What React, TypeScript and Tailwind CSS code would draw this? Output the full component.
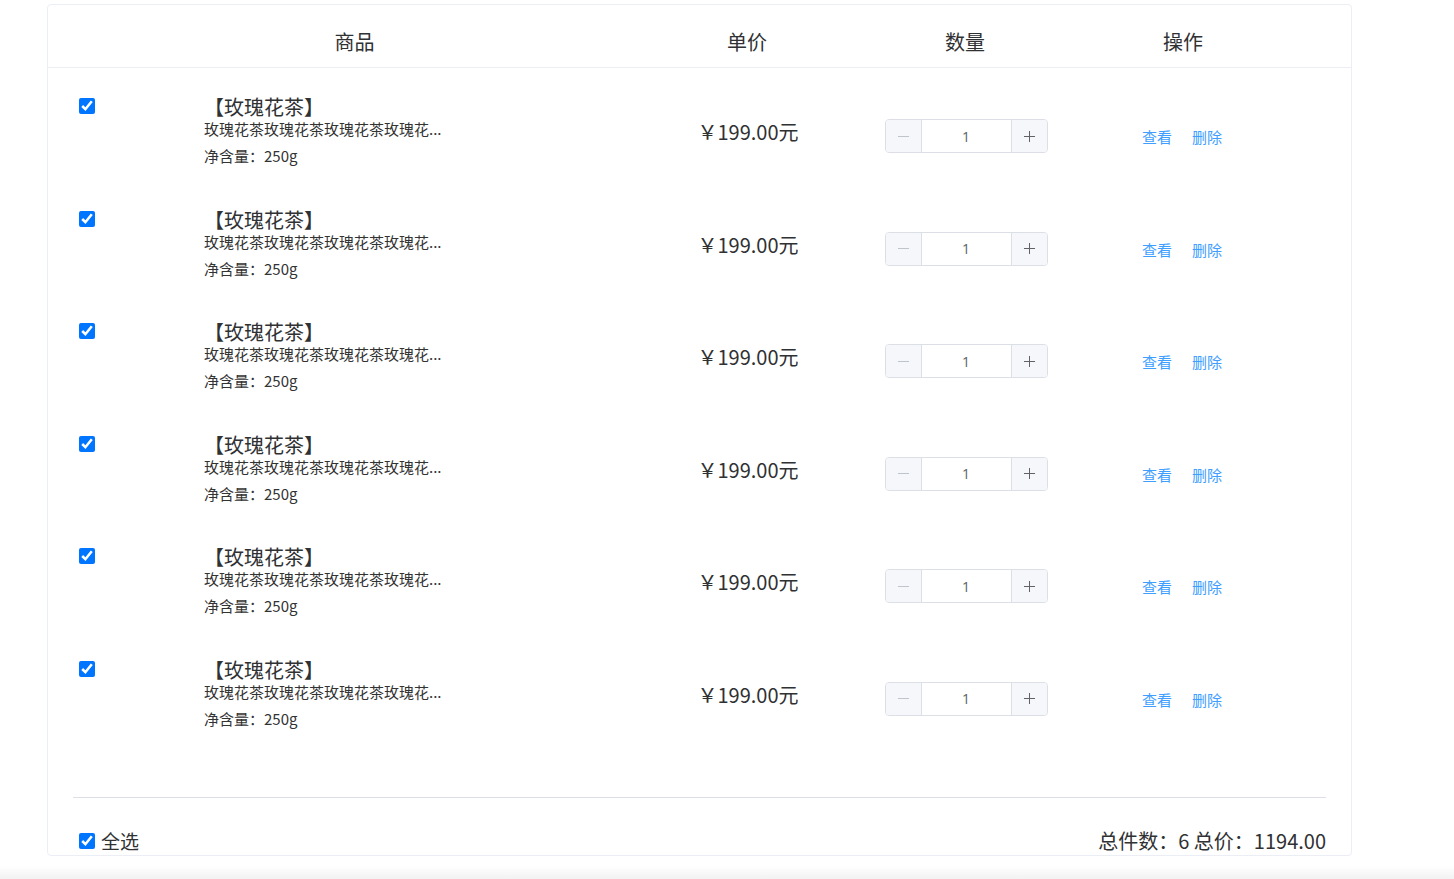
const items = Array.from({ length: 6 }, (_, i) => ({
  id: i + 1,
  title: "【玫瑰花茶】",
  desc: "玫瑰花茶玫瑰花茶玫瑰花茶玫瑰花茶玫瑰花茶玫瑰花茶",
  weight: "250g",
  price: 199,
  count: 1,
}));

// keep the first 15 chars, like the original "..." clamp
const clip = (s: string, n: number) => (s.length > n ? s.slice(0, n) + "..." : s);

const Stepper: React.FC<{ value: number }> = ({ value }) => (
  <div className="flex h-[34px] w-[163px] overflow-hidden rounded-[4px] border border-[#dcdfe6] bg-white">
    <button className="flex w-[36px] items-center justify-center border-r border-[#dcdfe6] bg-[#f5f7fa]">
      <span className="block h-px w-[11px] bg-[#c0c4cc]" />
    </button>
    <div className="flex flex-1 items-center justify-center font-['Open_Sans',sans-serif] text-[14px] text-[#606266]">
      {value}
    </div>
    <button className="relative flex w-[36px] items-center justify-center border-l border-[#dcdfe6] bg-[#f5f7fa]">
      <span className="block h-px w-[11px] bg-[#606266]" />
      <span className="absolute block h-[11px] w-px bg-[#606266]" />
    </button>
  </div>
);

const CartRow: React.FC<{ item: (typeof items)[number] }> = ({ item }) => (
  <div className="flex h-[112.5px] items-start">
    <div className="w-[156px] pl-[31px] pt-[22px]">
      <input type="checkbox" defaultChecked className="m-0 block h-[16px] w-[16px]" />
    </div>
    <div className="w-[435px] pt-[18px] text-[#303133]">
      <div className="text-[20px] leading-[25px]">{item.title}</div>
      <div className="whitespace-nowrap text-[15px] leading-[20px] text-[#333]">{clip(item.desc, 15)}</div>
      <div className="mt-[7px] text-[15px] leading-[20px] text-[#333]">净含量：{item.weight}</div>
    </div>
    <div className="w-[218px] pt-[42px] text-center text-[20px] leading-[28px] text-[#303133]">
      ￥{item.price.toFixed(2)}元
    </div>
    <div className="flex w-[218px] justify-center pt-[43px]">
      <Stepper value={item.count} />
    </div>
    <div className="flex w-[218px] justify-center gap-[20px] pr-[4px] pt-[51px] text-[15px] leading-[20px] text-[#409eff]">
      <a className="cursor-pointer">查看</a>
      <a className="cursor-pointer">删除</a>
    </div>
  </div>
);

export default function App() {
  const total = items.reduce((s, it) => s + it.price * it.count, 0);
  const count = items.reduce((s, it) => s + it.count, 0);
  return (
    <div className="min-h-[879px] bg-white font-['Noto_Sans_CJK_SC',sans-serif] text-[#303133]">
      <div className="ml-[47px] pt-[4px]">
        <div className="h-[852px] w-[1305px] overflow-hidden rounded-[4px] border border-[#ebeef5] bg-white">
          <div className="flex h-[63px] items-center border-b border-[#ebeef5] pt-[12px] text-[20px]">
            <div className="w-[590px] pl-[23px] text-center">商品</div>
            <div className="w-[218px] text-center">单价</div>
            <div className="w-[218px] text-center">数量</div>
            <div className="w-[218px] text-center">操作</div>
          </div>
          <div className="pt-[8px]">
            {items.map((it) => (
              <CartRow key={it.id} item={it} />
            ))}
          </div>
          <div className="mx-[25px] mt-[46px] border-t border-[#dcdfe6]" />
          <div className="flex items-center justify-between pl-[31px] pr-[25px] pt-[29px] text-[20px] leading-[28px]">
            <label className="flex items-center gap-[6px]">
              <input type="checkbox" defaultChecked className="m-0 block h-[16px] w-[16px]" />
              <span className="text-[19px]">全选</span>
            </label>
            <div>
              总件数：{count} 总价：{total.toFixed(2)}
            </div>
          </div>
        </div>
      </div>
      <div className="mt-[10px] h-[13px] bg-gradient-to-b from-white to-[#f2f2f2]" />
    </div>
  );
}
